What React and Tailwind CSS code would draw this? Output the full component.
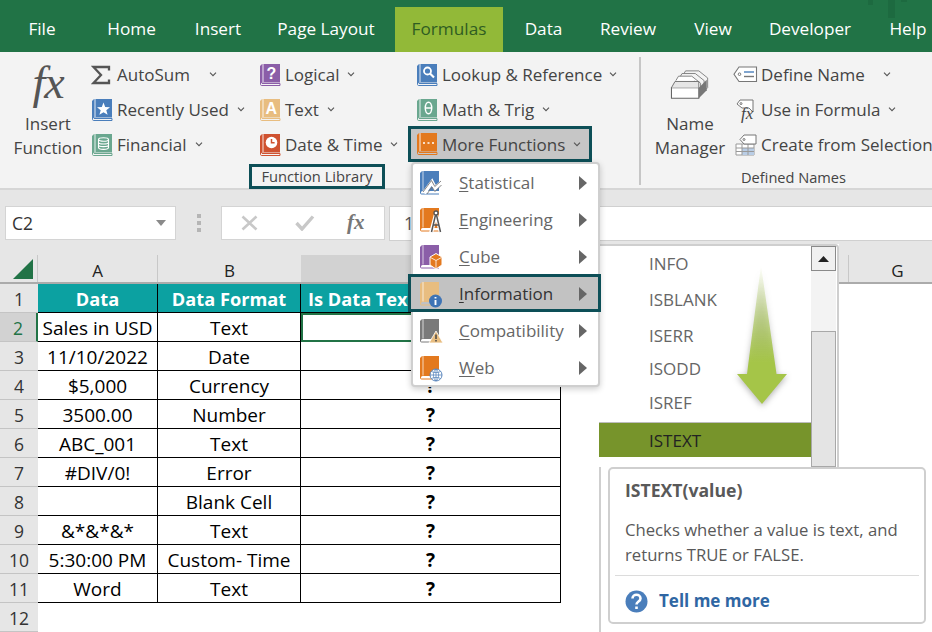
import React from "react";

const F = "font-['Open_Sans','Noto_Sans',sans-serif]";

function Book({ color, children }) {
  return (
    <svg width="22" height="24" viewBox="0 0 22 24" className="shrink-0">
      <path d="M3.5 1H21V19.5H3.5A1.5 1.5 0 0 0 2 21V2.5A1.5 1.5 0 0 1 3.5 1Z" fill={color} />
      <path d="M1.5 2.5V21.5A1.2 1.2 0 0 0 2.7 22.5H21V20.5H3" fill="none" stroke={color} strokeWidth="1" />
      <path d="M4 1V19" stroke="#fff" strokeWidth="1" opacity="0.85" />
      {children}
    </svg>
  );
}

function Chev({ className = "" }) {
  return (
    <svg width="8" height="5" viewBox="0 0 8 5" className={className}>
      <path d="M1 0.7L4 3.7L7 0.7" fill="none" stroke="#555" strokeWidth="1.1" />
    </svg>
  );
}

function Row({ icon, text, chevMl, iconW = "w-[26px]" }) {
  return (
    <div className="h-[35px] flex items-center">
      <div className={`${iconW} flex shrink-0`}>{icon}</div>
      <span className="text-[17px] text-[#444] whitespace-nowrap">{text}</span>
      {chevMl ? <Chev className={chevMl} /> : null}
    </div>
  );
}

const Sigma = () => (
  <svg width="20" height="20" viewBox="0 0 20 20">
    <path d="M18 5.5V2H2.500L10 10L2.500 18H18V14.500" fill="none" stroke="#555" strokeWidth="2.300" />
  </svg>
);
const Star = () => <polygon points="12.5,4.5 14.2,9 19,9.2 15.3,12.2 16.6,16.8 12.5,14.2 8.4,16.8 9.7,12.2 6,9.2 10.8,9" fill="#fff" />;
const Db = () => (
  <g fill="none" stroke="#fff" strokeWidth="1.1">
    <ellipse cx="12.5" cy="6.5" rx="5" ry="1.8" />
    <path d="M7.5 6.5V14.5C7.5 17 17.5 17 17.5 14.5V6.5M7.5 9.2C7.5 11.5 17.5 11.5 17.5 9.2M7.5 12C7.5 14.2 17.5 14.2 17.5 12" />
  </g>
);
const Clock = () => (
  <g>
    <circle cx="12.5" cy="9.5" r="5.8" fill="#fff" />
    <path d="M12.5 6V9.7H15.6" fill="none" stroke="#cf5230" strokeWidth="1.5" />
  </g>
);
const Lens = () => (
  <g fill="none" stroke="#fff">
    <circle cx="11.5" cy="8" r="3.5" strokeWidth="1.8" />
    <path d="M14 10.5L18 14.5" strokeWidth="2.2" />
  </g>
);
const Theta = () => (
  <g fill="none" stroke="#fff" strokeWidth="1.5">
    <ellipse cx="12.5" cy="10" rx="3.2" ry="5.8" />
    <path d="M9.3 10H15.7" />
  </g>
);
const Dots = () => <path d="M7 11H9M11.5 11H13.5M16 11H18" stroke="#fff" strokeWidth="1.6" />;

function NameManagerIcon() {
  return (
    <svg width="42" height="30" viewBox="0 0 44 34">
      <path d="M14 6L17 1H32L42 9V20L40 22" fill="#f3f3f3" stroke="#777" strokeWidth="1" />
      <path d="M10 9L13 4H28L38 12V22" fill="#f3f3f3" stroke="#777" strokeWidth="1" />
      <path d="M6 12L9 7H24L34 15V24" fill="#fff" stroke="#777" strokeWidth="1" />
      <circle cx="27" cy="14" r="1.2" fill="none" stroke="#777" />
      <path d="M1 20H32V32H1Z" fill="#fff" stroke="#666" strokeWidth="1.2" />
      <path d="M1 20L5 13H32V20" fill="#e6e6e6" stroke="#666" strokeWidth="1" />
      <path d="M32 20L41 11V23L32 32Z" fill="#777" />
    </svg>
  );
}
const DefineIcon = () => (
  <svg width="25" height="17" viewBox="0 0 25 17" className="shrink-0">
    <path d="M6 1H23.5V15.5H6L1 8.2Z" fill="#fff" stroke="#777" strokeWidth="1.1" />
    <circle cx="6.5" cy="8.2" r="1.3" fill="none" stroke="#777" />
    <path d="M11 6H21" stroke="#4a7ebb" strokeWidth="1.4" />
    <path d="M11 10.5H21" stroke="#777" strokeWidth="1.4" />
  </svg>
);
const UseIcon = () => (
  <svg width="20" height="22" viewBox="0 0 20 22" className="shrink-0 ml-[3px] overflow-visible">
    <path d="M4 1H17V13L13 9H6L1 5Z" fill="#fff" stroke="#777" strokeWidth="1" />
    <circle cx="5" cy="4.6" r="1" fill="none" stroke="#777" />
    <text x="5" y="20" fontFamily="Liberation Serif" fontStyle="italic" fontSize="17" fill="#444">fx</text>
  </svg>
);
const CreateIcon = () => (
  <svg width="22" height="23" viewBox="0 0 22 23" className="shrink-0 ml-[2px]">
    <path d="M1 11H19V22H1Z" fill="#fff" stroke="#999" />
    <path d="M7 15H19V22H7Z" fill="#b9cde5" />
    <path d="M1 15H19M1 18.500H19M7 11V22M13 11V22" stroke="#999" />
    <path d="M9 2H21V11H9L5 6.500Z" fill="#fff" stroke="#777" />
    <circle cx="9" cy="6.500" r="1" fill="none" stroke="#777" />
  </svg>
);

function Tab({ children, w }) {
  return <div className={`${w} text-center text-white text-[17.2px] leading-[57px] shrink-0`}>{children}</div>;
}

function Ribbon() {
  return (
    <div className="h-[138px] bg-[#f3f3f3] border-b-2 border-[#d6d6d6] flex relative">
      <div className="w-[91px] shrink-0 flex flex-col items-center pl-[5px] pt-[6px]">
        <span className="font-['Liberation_Serif',serif] italic text-[#555] text-[46px] leading-[50px] h-[55px] -tracking-[1px]">fx</span>
        <span className="text-[17px] text-[#444] leading-[24px] -mt-[1px]">Insert</span>
        <span className="text-[17px] text-[#444] leading-[24px]">Function</span>
      </div>
      <div className="w-[168px] shrink-0 pt-[5px]">
        <Row icon={<Sigma />} text="AutoSum" chevMl="ml-[19px]" />
        <Row icon={<Book color="#4a7ebb"><Star /></Book>} text="Recently Used" chevMl="ml-[8px]" />
        <Row icon={<Book color="#6aa78f"><Db /></Book>} text="Financial" chevMl="ml-[8px]" />
      </div>
      <div className="w-[157px] shrink-0 pt-[5px]">
        <Row icon={<Book color="#8b5ea8"><text x="7.500" y="16" fontSize="16" fontWeight="700" fontFamily="Liberation Sans" fill="#fff">?</text></Book>} text="Logical" chevMl="ml-[7px]" />
        <Row icon={<Book color="#e8bd80"><text x="6.500" y="16" fontSize="16" fontWeight="700" fontFamily="Liberation Sans" fill="#fff">A</text></Book>} text="Text" chevMl="ml-[8px]" />
        <Row icon={<Book color="#cf5230"><Clock /></Book>} text="Date & Time" chevMl="ml-[7px]" />
      </div>
      <div className="w-[223px] shrink-0 pt-[5px]">
        <Row icon={<Book color="#4a7ebb"><Lens /></Book>} text="Lookup & Reference" chevMl="ml-[7px]" />
        <Row icon={<Book color="#6aa78f"><Theta /></Book>} text="Math & Trig" chevMl="ml-[8px]" />
        <Row icon={<Book color="#e3791e"><Dots /></Book>} text="More Functions" chevMl="ml-[8px]" />
      </div>
      <div className="w-[2px] h-[128px] mt-[5px] bg-[#c6c6c6] shrink-0" />
      <div className="w-[92px] shrink-0 flex flex-col items-center pl-[6px] pt-[18px]">
        <NameManagerIcon />
        <span className="text-[17px] text-[#444] leading-[24px] mt-[12px]">Name</span>
        <span className="text-[17px] text-[#444] leading-[24px] whitespace-nowrap">Manager</span>
      </div>
      <div className="flex-1 pt-[5px]">
        <Row icon={<DefineIcon />} text="Define Name" chevMl="ml-[18px]" iconW="w-[28px]" />
        <Row icon={<UseIcon />} text="Use in Formula" chevMl="ml-[8px]" iconW="w-[28px]" />
        <Row icon={<CreateIcon />} text="Create from Selection" iconW="w-[28px]" />
      </div>
      <div className="absolute left-[249px] top-[112px] w-[136px] h-[25px] border-[3px] border-[#0d4f57] flex items-center justify-center text-[14.7px] text-[#444] whitespace-nowrap">Function Library</div>
      <div className="absolute left-[741px] top-[115px] text-[14.6px] text-[#444] whitespace-nowrap">Defined Names</div>
      <div className="absolute left-[408px] top-[74px] w-[184px] h-[36px] border-[3px] border-[#0d4f57] bg-[#c6c6c6] flex items-center pl-[5px]">
        <Book color="#e3791e"><Dots /></Book>
        <span className="ml-[4px] mt-[1px] text-[17px] text-[#444] whitespace-nowrap">More Functions</span>
        <Chev className="ml-[8px]" />
      </div>
    </div>
  );
}

function FormulaBar() {
  return (
    <div className="h-[65px] bg-[#e6e6e6] flex items-start pt-[16px] pl-[5px]">
      <div className="w-[171px] h-[34px] bg-white border border-[#d4d4d4] flex items-center justify-between pl-[6px] pr-[9px] text-[17.5px] text-[#333]">
        C2
        <svg width="10" height="6" viewBox="0 0 10 6"><path d="M0 0H10L5 6Z" fill="#8a8a8a" /></svg>
      </div>
      <div className="w-[45px] h-[34px] flex flex-col items-center justify-center gap-[3px]">
        <i className="w-[4px] h-[4px] bg-[#b5b5b5]" />
        <i className="w-[4px] h-[4px] bg-[#b5b5b5]" />
        <i className="w-[4px] h-[4px] bg-[#b5b5b5]" />
      </div>
      <div className="w-[164px] h-[34px] bg-white border border-[#d4d4d4] flex items-center pl-[19px] shrink-0">
        <svg width="17" height="16" viewBox="0 0 17 16"><path d="M1.500 1.500L15.500 14.500M15.500 1.500L1.500 14.500" stroke="#c8c8c8" strokeWidth="2.600" /></svg>
        <svg width="20" height="16" viewBox="0 0 20 16" className="ml-[37px]"><path d="M1.500 8L7 14L18 1.500" fill="none" stroke="#c8c8c8" strokeWidth="3.400" /></svg>
        <span className="ml-[32px] font-['Liberation_Serif',serif] italic font-bold text-[21px] text-[#777]">fx</span>
      </div>
      <div className="ml-[4px] flex-1 h-[35px] bg-white border border-[#d0d0d0] border-r-0 pl-[14px] text-[17.5px] text-[#555] leading-[32px]">1</div>
    </div>
  );
}

const rows = [
  ["Sales in USD", "Text", ""],
  ["11/10/2022", "Date", ""],
  ["$5,000", "Currency", "?"],
  ["3500.00", "Number", "?"],
  ["ABC_001", "Text", "?"],
  ["#DIV/0!", "Error", "?"],
  ["", "Blank Cell", "?"],
  ["&*&*&*", "Text", "?"],
  ["5:30:00 PM", "Custom- Time", "?"],
  ["Word", "Text", "?"],
];

function Sheet() {
  return (
    <div className="bg-white text-black">
      <div className="h-[29px] flex bg-[#e6e6e6] border-b-2 border-[#ababab]">
        <div className="w-[38px] relative border-r border-[#c8c8c8] shrink-0">
          <svg width="22" height="22" viewBox="0 0 22 22" className="absolute right-[3px] bottom-[2px]"><path d="M21 1V21H1Z" fill="#217346" /></svg>
        </div>
        <div className="w-[120px] shrink-0 border-r border-[#c8c8c8] text-center text-[17px] leading-[32px] text-[#222]">A</div>
        <div className="w-[143px] shrink-0 text-center text-[17px] leading-[32px] text-[#222]">B</div>
        <div className="w-[260px] shrink-0 bg-[#d2d2d2]" />
        <div className="w-[287px] shrink-0" />
        <div className="w-[98px] shrink-0 border-l border-[#c8c8c8] text-center text-[17px] leading-[32px] text-[#222]">G</div>
      </div>
      <div className="grid grid-cols-[38px_120px_143px_260px_1fr] text-center text-[19px] leading-[30px]">
        <div className="h-[29px] bg-[#e6e6e6] border-b border-[#c4c4c4] text-[17.5px] text-[#333]">1</div>
        <div className="h-[29px] bg-[#0ca1a1] text-white font-bold text-[18.2px] border-r border-black border-b">Data</div>
        <div className="h-[29px] bg-[#0ca1a1] text-white font-bold text-[18.2px] border-r border-black border-b whitespace-nowrap">Data Format</div>
        <div className="h-[29px] bg-[#0ca1a1] text-white font-bold text-[18.2px] border-r border-black border-b whitespace-nowrap text-left pl-[7px]">Is Data Text</div>
        <div />
        {rows.map((r, i) => (
          <React.Fragment key={i}>
            <div className={`h-[29px] border-b border-[#c4c4c4] text-[17.5px] ${i === 0 ? "bg-[#d2d2d2] text-[#217346] border-r-2 border-r-[#217346]" : "bg-[#e6e6e6] text-[#333]"}`}>{i + 2}</div>
            <div className="h-[29px] border-r border-b border-black whitespace-nowrap">{r[0]}</div>
            <div className="h-[29px] border-r border-b border-black whitespace-nowrap">{r[1]}</div>
            <div className={`h-[29px] border-r border-b border-black font-bold ${i === 0 ? "outline-2 -outline-offset-2 outline-[#217346]" : ""}`}>{r[2]}</div>
            <div />
          </React.Fragment>
        ))}
        <div className="h-[29px] bg-[#e6e6e6] border-b border-[#c4c4c4] text-[17.5px] text-[#333]">12</div>
      </div>
    </div>
  );
}

function MenuBook({ color, extra }) {
  return (
    <svg width="24" height="28" viewBox="0 0 24 28" className="overflow-visible">
      <path d="M3.500 1H20V21H3.500A1.500 1.500 0 0 0 2 22.500V2.500A1.500 1.500 0 0 1 3.500 1Z" fill={color} />
      <path d="M1.500 2.500V23A1 1 0 0 0 2.500 24H20" fill="none" stroke={color} />
      <path d="M4 1V20.500" stroke="#fff" opacity="0.7" />
      {extra}
    </svg>
  );
}

function Menu() {
  const items = [
    ["S", "tatistical", <MenuBook color="#4a7ebb" extra={<g fill="none"><path d="M5 23L13 12L16 18L22 13" stroke="#fff" strokeWidth="4" /><path d="M4 22L12.500 10.500L15.800 16.500L22 11M8 24L13 17L16 21.500L22.500 15" stroke="#777" strokeWidth="0.900" /></g>} />],
    ["E", "ngineering", <MenuBook color="#e3791e" extra={<g fill="none"><path d="M17 7L12 26M17 7L22 26" stroke="#fff" strokeWidth="4" /><circle cx="17" cy="6" r="2" stroke="#555" strokeWidth="1.300" fill="#fff" /><path d="M16.500 8L12.500 25M17.500 8L21.500 25M13.500 18H20.500" stroke="#555" strokeWidth="1.500" /></g>} />],
    ["C", "ube", <MenuBook color="#8b5ea8" extra={<g><path d="M17 9.500L23 13V21L17 25L11 21V13Z" fill="#e3791e" stroke="#fff" /><path d="M11.500 13.500L17 16.500L22.500 13.500M17 16.500V24" fill="none" stroke="#fff" strokeWidth="0.800" /></g>} />],
    ["I", "nformation", <MenuBook color="#e8bd80" extra={<g><circle cx="16.500" cy="20" r="6.500" fill="#3f74b5" /><path d="M16.500 16V17.500M16.500 19V24" stroke="#fff" strokeWidth="1.900" /></g>} />],
    ["C", "ompatibility", <MenuBook color="#7a7a7a" extra={<g><path d="M17 13L24 25H10Z" fill="#e8bd80" stroke="#fff" strokeWidth="0.800" /><path d="M17 16.500V21M17 22V23.500" stroke="#444" strokeWidth="1.500" /></g>} />],
    ["W", "eb", <MenuBook color="#e3791e" extra={<g fill="#fff" stroke="#5a86bd" strokeWidth="1"><circle cx="17" cy="20" r="6" /><path d="M11 20H23M17 14V26M12.500 16.500C15 18 19 18 21.500 16.500M12.500 23.500C15 22 19 22 21.500 23.500M17 14C13.500 17 13.500 23 17 26M17 14C20.500 17 20.500 23 17 26" fill="none" strokeWidth="0.800" /></g>} />],
  ];
  return (
    <div className="absolute left-[411px] top-[162px] w-[189px] h-[225px] bg-white border-2 border-[#cfcfcf] rounded-[4px] shadow-[0_2px_6px_rgba(0,0,0,0.2)] z-[25]">
      {items.map(([u, rest, icon], i) => {
        const active = i === 3;
        return (
          <div key={i} className="h-[37px] flex items-center relative">
            {active ? <div className="absolute -left-[5px] w-[193px] -top-[1px] h-[38px] bg-[#c2c2c2] border-[3px] border-[#0d4f57]" /> : null}
            <div className="relative ml-[6px] w-[40px] shrink-0 flex pt-[3px]">{icon}</div>
            <span className={`relative text-[17px] ${active ? "text-[#333]" : "text-[#666]"}`}><u className="underline-offset-2">{u}</u>{rest}</span>
            <svg width="8" height="14" viewBox="0 0 8 14" className="absolute left-[166px]"><path d="M0 0L8 7L0 14Z" fill="#666" /></svg>
          </div>
        );
      })}
    </div>
  );
}

function SubMenu() {
  return (
    <div className="absolute left-[599px] top-[244px] w-[240px] h-[388px] bg-white border-l-2 border-[#cfcfcf] z-20">
      <div className="h-[223px] flex border-t-2 border-r-2 border-[#cfcfcf] rounded-tr-[4px] -ml-[2px] pl-[2px] bg-white">
        <div className="w-[210px] shrink-0 relative">
          <div className="pl-[48px] text-[17px] text-[#666]">
            <div className="h-[36px] leading-[36px]">INFO</div>
            <div className="h-[36px] leading-[36px]">ISBLANK</div>
            <div className="h-[36px] leading-[36px]">ISERR</div>
            <div className="h-[30px] leading-[30px]">ISODD</div>
            <div className="h-[38px] leading-[38px]">ISREF</div>
          </div>
          <div className="h-[35px] bg-[#77942b] border-t border-[#bdbdbd] pl-[50px] text-[17px] leading-[35px] text-[#222] -ml-[2px]">ISTEXT</div>
          <svg width="54" height="144" viewBox="0 0 54 144" className="absolute left-[135px] top-[19px] drop-shadow-[0_2px_3px_rgba(0,0,0,0.3)]">
            <defs>
              <linearGradient id="ag" x1="0" y1="0" x2="0" y2="1">
                <stop offset="0" stopColor="#a3c24c" stopOpacity="0" />
                <stop offset="0.4" stopColor="#a3c24c" stopOpacity="0.6" />
                <stop offset="0.7" stopColor="#a5c548" />
                <stop offset="1" stopColor="#a5c548" />
              </linearGradient>
            </defs>
            <path d="M25 0L40.500 109H51L26 139L1 109H11Z" fill="url(#ag)" />
          </svg>
        </div>
        <div className="w-[25px] shrink-0 bg-[#f3f3f3] relative">
          <div className="h-[25px] bg-[#f0f0f0] border border-[#8a8a8a] flex items-center justify-center">
            <svg width="11" height="6" viewBox="0 0 11 6"><path d="M5.500 0L11 6H0Z" fill="#222" /></svg>
          </div>
          <div className="absolute top-[85px] left-0 right-0 bottom-0 bg-[#e4e4e4] border border-[#a8a8a8]" />
        </div>
      </div>
    </div>
  );
}

function Tip() {
  return (
    <div className="absolute left-[608px] top-[467px] w-[318px] h-[157px] bg-white border-2 border-[#cfcfcf] rounded-[5px] z-30 flex flex-col text-[#595959]">
      <div className="pl-[15px] pt-[9px] text-[17.6px] font-bold leading-[24px] whitespace-nowrap">ISTEXT(value)</div>
      <div className="pl-[15px] mt-[15px] text-[16.7px] leading-[25px] whitespace-nowrap">Checks whether a value is text, and<br />returns TRUE or FALSE.</div>
      <div className="mx-[5px] mt-[8px] border-t border-[#dcdcdc]" />
      <div className="pl-[15px] mt-[12px] flex items-center gap-[11px]">
        <svg width="23" height="23" viewBox="0 0 23 23"><circle cx="11.500" cy="11.500" r="11" fill="#4a7ebb" /><path d="M7.500 8.500C7.500 3.500 15.500 3.500 15.500 8.500C15.500 11.500 11.500 11.500 11.500 14.500M11.500 16.500V19" fill="none" stroke="#fff" strokeWidth="2.600" /></svg>
        <span className="text-[#2f66a3] font-bold text-[17px] leading-[26px]">Tell me more</span>
      </div>
    </div>
  );
}

export default function App() {
  return (
    <div className={`${F} w-[932px] h-[632px] overflow-hidden relative bg-white`}>
      <div className="h-[52px] bg-[#217346] flex items-start relative">
        <Tab w="w-[84px]">File</Tab>
        <Tab w="w-[95px]">Home</Tab>
        <Tab w="w-[78px]">Insert</Tab>
        <Tab w="w-[138px]">Page Layout</Tab>
        <div className="w-[108px] h-[45px] mt-[7px] bg-[#92b938] text-center text-[17.2px] text-[#2f5d22] leading-[43px] shrink-0">Formulas</div>
        <Tab w="w-[81px]">Data</Tab>
        <Tab w="w-[88px]">Review</Tab>
        <Tab w="w-[82px]">View</Tab>
        <Tab w="w-[112px]">Developer</Tab>
        <Tab w="w-[84px]">Help</Tab>
        <svg width="50" height="20" viewBox="0 0 50 20" className="absolute left-[867px] top-0">
          <path d="M1 0H6V5H1ZM21 0H28V18H21ZM34 0H40V2H34Z" fill="#1d6a40" />
        </svg>
      </div>
      <Ribbon />
      <FormulaBar />
      <Sheet />
      <Menu />
      <SubMenu />
      <Tip />
    </div>
  );
}
